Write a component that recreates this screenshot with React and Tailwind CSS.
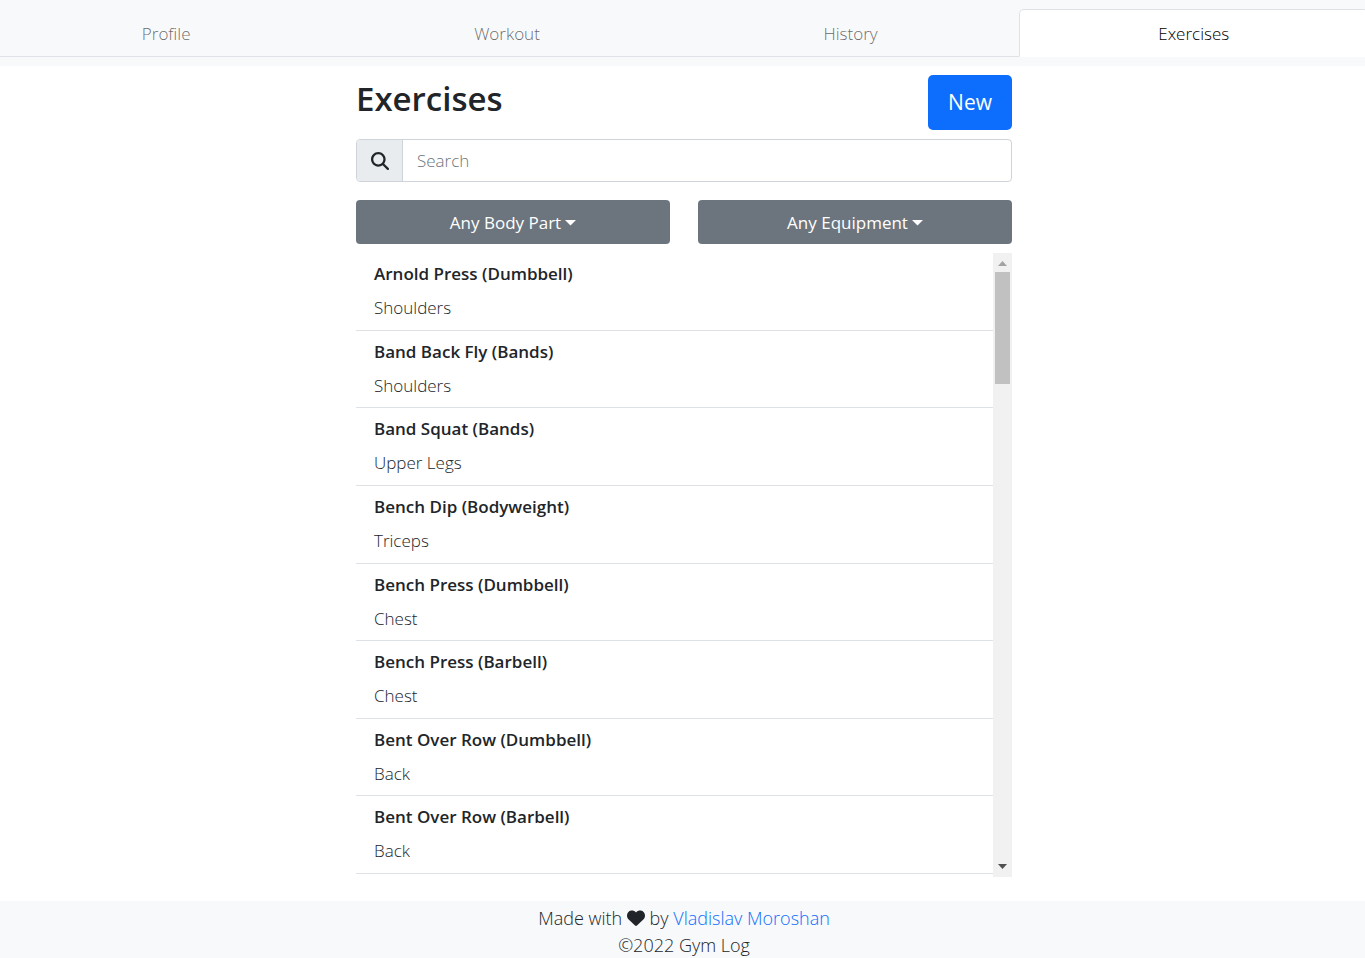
import { FaHeart, FaMagnifyingGlass } from 'react-icons/fa6';

const tabs = ['Profile', 'Workout', 'History', 'Exercises'];

const exercises = [
  { name: 'Arnold Press (Dumbbell)', bodyPart: 'Shoulders' },
  { name: 'Band Back Fly (Bands)', bodyPart: 'Shoulders' },
  { name: 'Band Squat (Bands)', bodyPart: 'Upper Legs' },
  { name: 'Bench Dip (Bodyweight)', bodyPart: 'Triceps' },
  { name: 'Bench Press (Dumbbell)', bodyPart: 'Chest' },
  { name: 'Bench Press (Barbell)', bodyPart: 'Chest' },
  { name: 'Bent Over Row (Dumbbell)', bodyPart: 'Back' },
  { name: 'Bent Over Row (Barbell)', bodyPart: 'Back' },
];

function NavTabs({ active }) {
  return (
    <header className="bg-[#f8f9fa] py-[9px]">
      <nav className="flex border-b border-[#dee2e6]">
        {tabs.map((tab) => (
          <a
            key={tab}
            href={`#${tab.toLowerCase()}`}
            className={`-mb-px flex h-12 flex-auto items-center justify-center pt-px ${
              tab === active
                ? 'rounded-t-[5px] border border-[#dee2e6] border-b-white bg-white px-4 text-black'
                : 'px-5 text-black/60'
            }`}
          >
            {tab}
          </a>
        ))}
      </nav>
    </header>
  );
}

function DropdownButton({ label }) {
  return (
    <button
      type="button"
      className="flex h-11 flex-1 items-center justify-center gap-1 rounded-[4px] bg-[#6c757d] pt-px font-normal text-white"
    >
      {label}
      <svg width="11" height="6" viewBox="0 0 11 6" fill="currentColor" aria-hidden="true">
        <path d="M0 0h11L5.5 5.5z" />
      </svg>
    </button>
  );
}

function Scrollbar() {
  return (
    <div className="flex w-[19px] shrink-0 flex-col items-center bg-[#f1f1f1]" aria-hidden="true">
      <svg className="shrink-0" width="19" height="19" viewBox="0 0 19 19" fill="#a3a3a3">
        <path d="M5 13h9L9.500 8z" />
      </svg>
      <div className="h-28 w-[15px] bg-[#c1c1c1]" />
      <svg className="mt-auto shrink-0" width="19" height="19" viewBox="0 0 19 19" fill="#505050">
        <path d="M5 6h9L9.500 11z" />
      </svg>
    </div>
  );
}

function ExerciseList() {
  return (
    <div className="mt-[9px] flex flex-1">
      <ul className="flex flex-1 flex-col pb-[3px]">
        {exercises.map((ex) => (
          <li
            key={ex.name}
            className="flex flex-1 flex-col gap-[7px] border-b border-[#dee2e6] px-[18px] pt-[7px]"
          >
            <h2 className="leading-[27px] font-semibold">{ex.name}</h2>
            <p className="leading-[27px]">{ex.bodyPart}</p>
          </li>
        ))}
      </ul>
      <Scrollbar />
    </div>
  );
}

export default function App() {
  return (
    <div className="overflow-x-hidden">
      <div className="-mr-[3px] flex min-h-screen flex-col bg-white font-['Open_Sans',sans-serif] text-[17px] font-light text-[#212529]">
        <NavTabs active="Exercises" />

        <main className="mx-auto flex w-full max-w-[656px] flex-1 flex-col pt-[9px] pb-6">
          <div className="flex items-start justify-between">
            <h1 className="text-[33px] leading-[47px] font-semibold">Exercises</h1>
            <button
              type="button"
              className="h-[55px] rounded-[5px] bg-[#0d6efd] px-5 pt-px text-[21px] font-normal text-white"
            >
              New
            </button>
          </div>

          <div className="mt-[9px] flex h-[43px] rounded-[4px] border border-[#ced4da]">
            <label
              htmlFor="search"
              className="flex w-[46px] items-center justify-center rounded-l-[3px] border-r border-[#ced4da] bg-[#e9ecef]"
            >
              <FaMagnifyingGlass size={18} aria-label="Search" />
            </label>
            <input
              id="search"
              type="text"
              placeholder="Search"
              className="min-w-0 flex-1 rounded-r-[3px] px-[14px] pt-px outline-none placeholder:text-[#6c757d]"
            />
          </div>

          <div className="mt-[18px] flex gap-7">
            <DropdownButton label="Any Body Part" />
            <DropdownButton label="Any Equipment" />
          </div>

          <ExerciseList />
        </main>

        <footer className="h-[57px] bg-[#f8f9fa] pt-1 text-center text-lg leading-[27px]">
          <p>
            Made with <FaHeart size={18} className="inline align-[-2px]" /> by{' '}
            <a href="#author" className="text-[#0d6efd]">
              Vladislav Moroshan
            </a>
          </p>
          <p>©2022 Gym Log</p>
        </footer>
      </div>
    </div>
  );
}
